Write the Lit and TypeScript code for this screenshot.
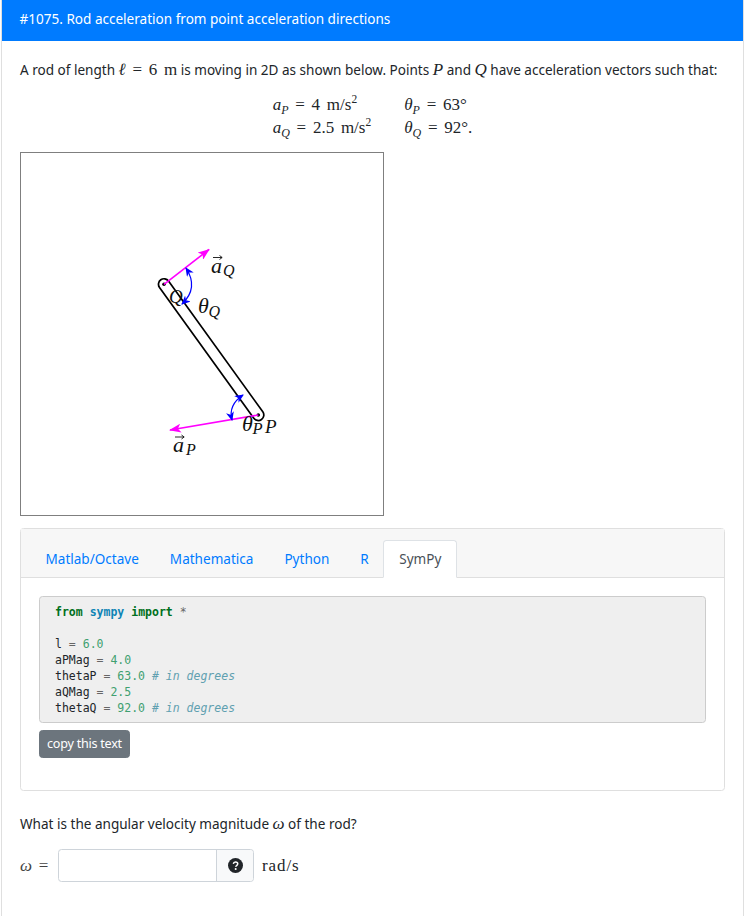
import { LitElement, css, html, svg } from "lit";
import { customElement, state } from "lit/decorators.js";

const TABS = ["Matlab/Octave", "Mathematica", "Python", "R", "SymPy"];

@customElement("app-root")
export class AppRoot extends LitElement {
  @state() active = "SymPy";

  static styles = css`
    :host {
      display: block;
      height: 916px;
      overflow: hidden;
      background: #fff;
      color: #212529;
      font-family: "Noto Sans", "Open Sans", sans-serif;
      font-size: 13.55px;
      line-height: 21px;
    }
    .card {
      margin: 0 1px;
      height: 930px;
      box-sizing: border-box;
      border: 1px solid #dfdfdf;
      border-top: 0;
    }
    .card-header {
      background: #007bff;
      color: #fff;
      height: 41px;
      box-sizing: border-box;
      padding: 9px 17.5px;
    }
    .card-body {
      padding: 18px 18px 0 18px;
    }
    p {
      margin: 0;
      height: 21px;
    }
    .m,
    .m i {
      font-family: "Liberation Serif", serif;
      font-size: 17px;
      word-spacing: 2.5px;
    }
    .m i sub {
      font-size: 12px;
      line-height: 0;
    }
    sup {
      font-size: 11.5px;
      line-height: 0;
    }
    .eq {
      display: grid;
      grid-template-columns: auto auto;
      justify-content: center;
      column-gap: 33px;
      margin: 13px 0 13px 0;
      line-height: 23px;
    }
    .figure {
      display: block;
      width: 364px;
      height: 364px;
      box-sizing: border-box;
      border: 1px solid #7f7f7f;
    }
    .code-card {
      margin-top: 12px;
      border: 1px solid #dfdfdf;
      border-radius: 3.5px;
      height: 263px;
      box-sizing: border-box;
    }
    .tabs {
      display: flex;
      height: 49px;
      box-sizing: border-box;
      padding: 11px 9px 0;
      background: #f7f7f7;
      border-bottom: 1px solid #dfdfdf;
    }
    .tab {
      height: 38px;
      box-sizing: border-box;
      padding: 8px 14.5px;
      color: #007bff;
      border: 1px solid transparent;
      border-radius: 3.5px 3.5px 0 0;
      cursor: pointer;
    }
    .tab.active {
      margin-left: -1px;
      padding-left: 15px;
      color: #495057;
      background: #fff;
      border-color: #dee2e6 #dee2e6 #fff;
    }
    .tab-body {
      padding: 18px 18px 0;
    }
    pre {
      margin: 0;
      height: 127px;
      box-sizing: border-box;
      padding: 7px 15px;
      background: #efefef;
      border: 1px solid #ccc;
      border-radius: 3.5px;
      color: #212529;
      font-family: "DejaVu Sans Mono", monospace;
      font-size: 11.5px;
      line-height: 16px;
    }
    .kw {
      color: #007020;
      font-weight: bold;
    }
    .ns {
      color: #0e84b5;
      font-weight: bold;
    }
    .op {
      color: #666;
    }
    .n {
      color: #40a070;
    }
    .c {
      color: #60a0b0;
      font-style: italic;
    }
    button {
      display: block;
      margin-top: 7px;
      width: 91px;
      height: 28px;
      padding: 0 0 2px;
      border: 1px solid #6c757d;
      border-radius: 3.5px;
      background: #6c757d;
      color: #fff;
      font: inherit;
      font-size: 12.6px;
      letter-spacing: -0.25px;
    }
    .question {
      margin-top: 22px;
    }
    .answer {
      display: flex;
      align-items: center;
      margin-top: 15px;
      height: 33px;
    }
    .answer .lhs {
      width: 38px;
      color: #444;
    }
    .group {
      display: flex;
      width: 196px;
      height: 33px;
      box-sizing: border-box;
      border: 1px solid #ced4da;
      border-radius: 3.5px;
    }
    input {
      flex: 1;
      min-width: 0;
      border: 0;
      padding: 0;
      background: transparent;
    }
    .help {
      width: 36px;
      display: flex;
      align-items: center;
      justify-content: center;
      background: #f8f9fa;
      border-left: 1px solid #ced4da;
      border-radius: 0 3.5px 3.5px 0;
    }
    .unit {
      margin-left: 8px;
      letter-spacing: 0.9px;
    }
    svg text {
      font-family: "Liberation Serif", serif;
      fill: #111;
    }
  `;

  private figure() {
    return svg`
      <svg class="figure" viewBox="21 153 362 362" xmlns="http://www.w3.org/2000/svg">
        <defs>
          <marker id="mag" viewBox="0 0 12 9" refX="11" refY="4.5" markerWidth="12" markerHeight="9" orient="auto-start-reverse" markerUnits="userSpaceOnUse">
            <path d="M0 0L12 4.5L0 9L3 4.5Z" fill="#f0f"></path>
          </marker>
          <marker id="blu" viewBox="0 0 9 8" refX="8" refY="4" markerWidth="9" markerHeight="8" orient="auto-start-reverse" markerUnits="userSpaceOnUse">
            <path d="M0 0L9 4L0 8L2.5 4Z" fill="#00f"></path>
          </marker>
        </defs>
        <path d="M168.5 281.1 L262.8 411.8 A5.5 5.5 0 0 1 253.8 418.2 L159.5 287.5 A5.5 5.5 0 0 1 168.5 281.1Z" fill="none" stroke="#000" stroke-width="1.7"></path>
        <circle cx="164" cy="284.3" r="1.8" fill="#000"></circle>
        <circle cx="258.3" cy="415" r="1.8" fill="#000"></circle>
        <path d="M164 284.3L209 249.5" stroke="#f0f" stroke-width="1.6" fill="none" marker-end="url(#mag)"></path>
        <path d="M258.3 415L170 430" stroke="#f0f" stroke-width="1.6" fill="none" marker-end="url(#mag)"></path>
        <path d="M182 304Q199 288 186 268" stroke="#00f" stroke-width="1.2" fill="none" marker-start="url(#blu)" marker-end="url(#blu)"></path>
        <path d="M243 395Q228 405 232 420" stroke="#00f" stroke-width="1.2" fill="none" marker-start="url(#blu)" marker-end="url(#blu)"></path>
        <text x="211" y="272.5" font-size="22" font-style="italic">a</text>
        <path d="M213 257.5H222M219.5 255.5L222.2 257.5L219.5 259.5" stroke="#111" stroke-width="0.9" fill="none"></path>
        <text x="223" y="276" font-size="16" font-style="italic">Q</text>
        <text x="198" y="313" font-size="22" font-style="italic">θ</text>
        <text x="208.5" y="317" font-size="16" font-style="italic">Q</text>
        <text x="169" y="303" font-size="19" font-style="italic">Q</text>
        <text x="242" y="431" font-size="22" font-style="italic">θ</text>
        <text x="252.5" y="434" font-size="16.5" font-style="italic">P</text>
        <text x="265" y="433" font-size="19" font-style="italic">P</text>
        <text x="173" y="452" font-size="22" font-style="italic">a</text>
        <path d="M175 437H184M181.5 435L184.2 437L181.5 439" stroke="#111" stroke-width="0.9" fill="none"></path>
        <text x="186" y="455" font-size="16" font-style="italic">P</text>
      </svg>
    `;
  }

  render() {
    return html`
      <div class="card">
        <div class="card-header">#1075. Rod acceleration from point acceleration directions</div>
        <div class="card-body">
          <p>
            A rod of length <span class="m"><i>ℓ</i> = 6 m</span> is moving in 2D as shown below. Points
            <span class="m"><i>P</i></span> and <span class="m"><i>Q</i></span> have acceleration vectors such that:
          </p>
          <div class="eq m">
            <span><i>a<sub>P</sub></i> = 4 m/s<sup>2</sup></span>
            <span><i>θ<sub>P</sub></i> = 63°</span>
            <span><i>a<sub>Q</sub></i> = 2.5 m/s<sup>2</sup></span>
            <span><i>θ<sub>Q</sub></i> = 92°.</span>
          </div>
          ${this.figure()}
          <div class="code-card">
            <div class="tabs">
              ${TABS.map(
                (t) => html`<div class="tab ${t === this.active ? "active" : ""}" @click=${() => (this.active = t)}>${t}</div>`
              )}
            </div>
            <div class="tab-body">
              <pre><span class="kw">from</span> <span class="ns">sympy</span> <span class="kw">import</span> <span class="op">*</span>

l <span class="op">=</span> <span class="n">6.0</span>
aPMag <span class="op">=</span> <span class="n">4.0</span>
thetaP <span class="op">=</span> <span class="n">63.0</span> <span class="c"># in degrees</span>
aQMag <span class="op">=</span> <span class="n">2.5</span>
thetaQ <span class="op">=</span> <span class="n">92.0</span> <span class="c"># in degrees</span></pre>
              <button>copy this text</button>
            </div>
          </div>
          <p class="question">What is the angular velocity magnitude <span class="m"><i>ω</i></span> of the rod?</p>
          <div class="answer">
            <span class="lhs m"><i>ω</i> =</span>
            <div class="group">
              <input type="text" aria-label="answer" />
              <div class="help">
                <svg width="15" height="15" viewBox="0 0 16 16">
                  <circle cx="8" cy="8" r="8" fill="#212529"></circle>
                  <path d="M5.7 6.2A2.3 2.3 0 0 1 8 4.2c1.4 0 2.4.9 2.4 2 0 1.9-2.2 1.7-2.2 3.2" fill="none" stroke="#fff" stroke-width="1.6"></path>
                  <circle cx="8.2" cy="11.8" r="1.1" fill="#fff"></circle>
                </svg>
              </div>
            </div>
            <span class="unit m">rad/s</span>
          </div>
        </div>
      </div>
    `;
  }
}
